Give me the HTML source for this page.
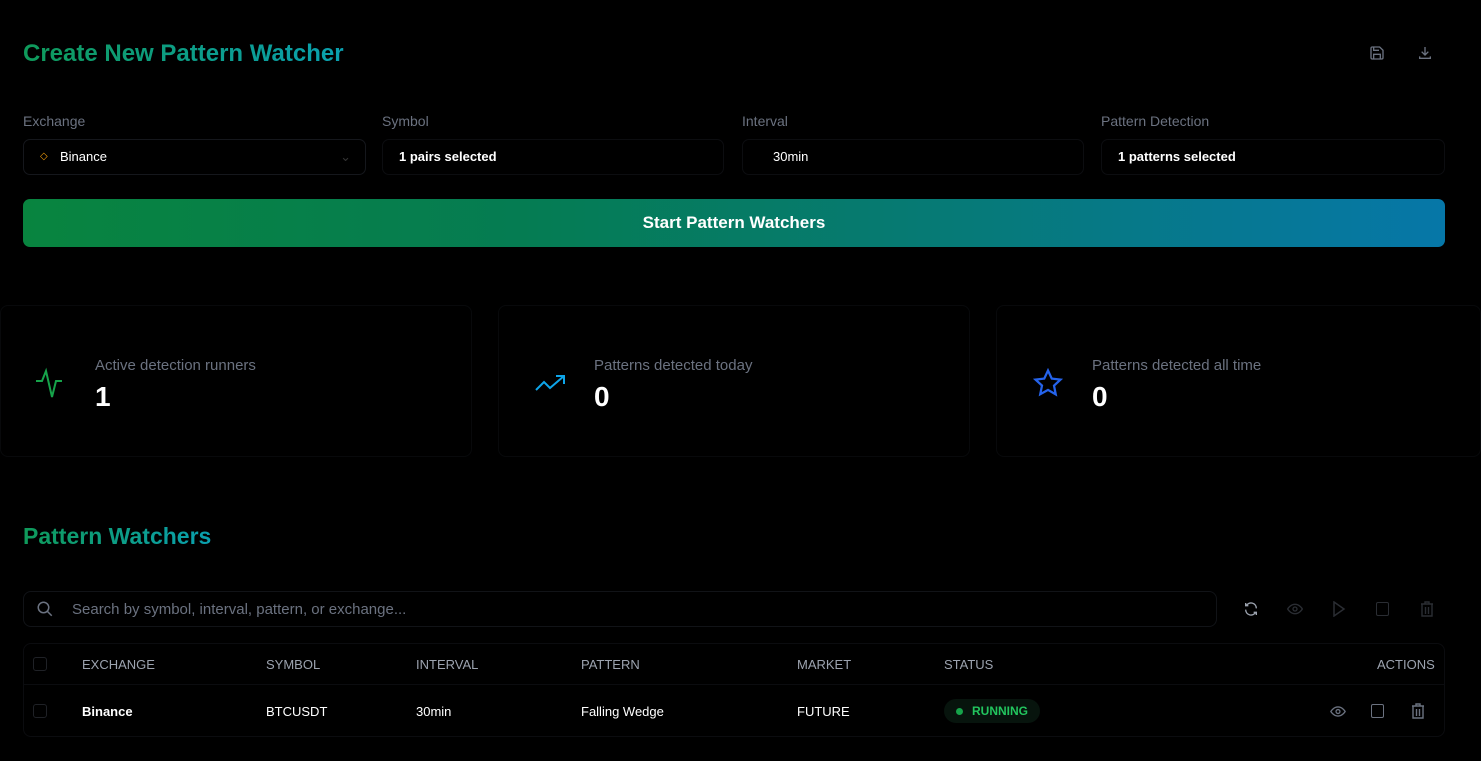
<!DOCTYPE html>
<html><head><meta charset="utf-8"><style>
*{box-sizing:border-box;margin:0;padding:0}
body{width:1481px;height:761px;background:#000;font-family:"Liberation Sans",sans-serif;color:#fff;overflow:hidden;position:relative}
.abs{position:absolute}
h1,h2{font-weight:bold;background:linear-gradient(90deg,#0f9a5a,#0aa0b0);-webkit-background-clip:text;background-clip:text;color:transparent}
.lbl{font-size:14px;color:#6b7280}
.field{height:36px;border:1px solid #0c0d10;border-radius:7px;font-size:13px;font-weight:bold;padding:0 16px;line-height:34px}
.card{border:1px solid #08090b;border-radius:8px;height:152px}
.cl{font-size:15px;color:#6b7280}
.cv{font-size:28px;font-weight:bold}
.th{font-size:13px;color:#9ca3af}
.td{font-size:13px}
.cb{width:14px;height:14px;border:1px solid #1f2126;border-radius:3px}
</style></head><body>
<h1 class="abs" style="left:23px;top:40px;font-size:24px">Create New Pattern Watcher</h1>
<svg class="abs" style="left:1369px;top:45px" width="16" height="16" viewBox="0 0 24 24" fill="none" stroke="#6b7280" stroke-width="2"><path d="M5 3h11l5 5v11a2 2 0 0 1-2 2H5a2 2 0 0 1-2-2V5a2 2 0 0 1 2-2z"/><path d="M7 3v5h8M7 21v-7h10v7"/></svg>
<svg class="abs" style="left:1417px;top:45px" width="16" height="16" viewBox="0 0 24 24" fill="none" stroke="#6b7280" stroke-width="2"><path d="M12 3v12M7 10l5 5 5-5M4 17v3h16v-3"/></svg>
<div class="abs lbl" style="left:23px;top:113px">Exchange</div>
<div class="abs lbl" style="left:382px;top:113px">Symbol</div>
<div class="abs lbl" style="left:742px;top:113px">Interval</div>
<div class="abs lbl" style="left:1101px;top:113px">Pattern Detection</div>
<div class="abs field" style="left:23px;top:139px;width:343px;font-weight:normal;padding-left:36px;border-color:#15171c"><span class="abs" style="left:16px;top:0;color:#f59e0b;font-size:10px">◇</span>Binance<span class="abs" style="right:14px;top:0;color:#333">⌄</span></div>
<div class="abs field" style="left:382px;top:139px;width:342px">1 pairs selected</div>
<div class="abs field" style="left:742px;top:139px;width:342px;font-weight:normal;padding-left:30px">30min</div>
<div class="abs field" style="left:1101px;top:139px;width:344px">1 patterns selected</div>
<div class="abs" style="left:23px;top:199px;width:1422px;height:48px;border-radius:7px;background:linear-gradient(90deg,#08843f,#057c52 35%,#067a76 65%,#0677a8);font-size:17px;font-weight:bold;text-align:center;line-height:48px">Start Pattern Watchers</div>
<div class="abs card" style="left:0;top:305px;width:472px"></div>
<div class="abs card" style="left:498px;top:305px;width:472px"></div>
<div class="abs card" style="left:996px;top:305px;width:485px"></div>
<svg class="abs" style="left:36px;top:367px" width="30" height="32" viewBox="0 0 30 32" fill="none" stroke="#16a34a" stroke-width="2"><path d="M0 14h6l4-10 6 26 4-16h6"/></svg>
<svg class="abs" style="left:535px;top:374px" width="32" height="18" viewBox="0 0 32 18" fill="none" stroke="#0ea5e9" stroke-width="2"><path d="M1 16l8-8 6 6 14-12M21 2h8v8"/></svg>
<svg class="abs" style="left:1032px;top:368px" width="32" height="30" viewBox="0 0 24 24" fill="none" stroke="#2563eb" stroke-width="1.8"><path d="M12 2l3 6.5 7 .8-5.2 4.8 1.4 7L12 17.5 5.8 21l1.4-7L2 9.3l7-.8z"/></svg>
<div class="abs cl" style="left:95px;top:357px">Active detection runners</div>
<div class="abs cv" style="left:95px;top:381px">1</div>
<div class="abs cl" style="left:594px;top:357px">Patterns detected today</div>
<div class="abs cv" style="left:594px;top:381px">0</div>
<div class="abs cl" style="left:1092px;top:357px">Patterns detected all time</div>
<div class="abs cv" style="left:1092px;top:381px">0</div>
<h2 class="abs" style="left:23px;top:523px;font-size:23px">Pattern Watchers</h2>
<div class="abs" style="left:23px;top:591px;width:1194px;height:36px;border:1px solid #111317;border-radius:8px;font-size:15px;color:#6b7280;line-height:36px;padding-left:48px">Search by symbol, interval, pattern, or exchange...</div>
<svg class="abs" style="left:36px;top:600px" width="18" height="18" viewBox="0 0 24 24" fill="none" stroke="#6b7280" stroke-width="2"><circle cx="10" cy="10" r="7"/><path d="M15 15l6 6"/></svg>
<svg class="abs" style="left:1243px;top:601px" width="16" height="16" viewBox="0 0 24 24" fill="none" stroke="#9ca3af" stroke-width="2"><path d="M20 11A8 8 0 0 0 5 7M4 3v4h4M4 13a8 8 0 0 0 15 4M20 21v-4h-4"/></svg>
<svg class="abs" style="left:1287px;top:602px" width="16" height="14" viewBox="0 0 24 20" fill="none" stroke="#2a2d33" stroke-width="2"><path d="M1 10s4-7 11-7 11 7 11 7-4 7-11 7S1 10 1 10z"/><circle cx="12" cy="10" r="3"/></svg>
<svg class="abs" style="left:1332px;top:601px" width="14" height="16" viewBox="0 0 14 16" fill="none" stroke="#2a2d33" stroke-width="1.5"><path d="M2 1l10 7-10 7z"/></svg>
<div class="abs" style="left:1376px;top:602px;width:13px;height:14px;border:1.5px solid #2a2d33;border-radius:2px"></div>
<svg class="abs" style="left:1420px;top:601px" width="14" height="16" viewBox="0 0 14 16" fill="none" stroke="#2a2d33" stroke-width="1.4"><path d="M1 3h12M5 3V1h4v2M2 3v12h10V3M5.5 6v7M8.5 6v7"/></svg>
<div class="abs" style="left:23px;top:643px;width:1422px;height:94px;border:1px solid #0b0c0f;border-radius:8px"></div>
<div class="abs" style="left:24px;top:684px;width:1420px;height:1px;background:#0b0c0f"></div>
<div class="abs cb" style="left:33px;top:657px"></div>
<div class="abs cb" style="left:33px;top:704px"></div>
<div class="abs th" style="left:82px;top:657px">EXCHANGE</div>
<div class="abs th" style="left:266px;top:657px">SYMBOL</div>
<div class="abs th" style="left:416px;top:657px">INTERVAL</div>
<div class="abs th" style="left:581px;top:657px">PATTERN</div>
<div class="abs th" style="left:797px;top:657px">MARKET</div>
<div class="abs th" style="left:944px;top:657px">STATUS</div>
<div class="abs th" style="left:1377px;top:657px">ACTIONS</div>
<div class="abs td" style="left:82px;top:704px;font-weight:bold">Binance</div>
<div class="abs td" style="left:266px;top:704px">BTCUSDT</div>
<div class="abs td" style="left:416px;top:704px">30min</div>
<div class="abs td" style="left:581px;top:704px">Falling Wedge</div>
<div class="abs td" style="left:797px;top:704px">FUTURE</div>
<div class="abs" style="left:944px;top:699px;width:96px;height:24px;border-radius:12px;background:#07140d;color:#22c55e;font-size:12px;font-weight:bold;line-height:24px;padding-left:28px"><span class="abs" style="left:12px;top:9px;width:7px;height:7px;border-radius:50%;background:#16a34a"></span>RUNNING</div>
<svg class="abs" style="left:1330px;top:705px" width="16" height="13" viewBox="0 0 24 20" fill="none" stroke="#6b7280" stroke-width="2"><path d="M1 10s4-7 11-7 11 7 11 7-4 7-11 7S1 10 1 10z"/><circle cx="12" cy="10" r="3"/></svg>
<div class="abs" style="left:1371px;top:704px;width:13px;height:14px;border:1.5px solid #6b7280;border-radius:2px"></div>
<svg class="abs" style="left:1411px;top:703px" width="14" height="16" viewBox="0 0 14 16" fill="none" stroke="#6b7280" stroke-width="1.4"><path d="M1 3h12M5 3V1h4v2M2 3v12h10V3M5.5 6v7M8.5 6v7"/></svg>
</body></html>
